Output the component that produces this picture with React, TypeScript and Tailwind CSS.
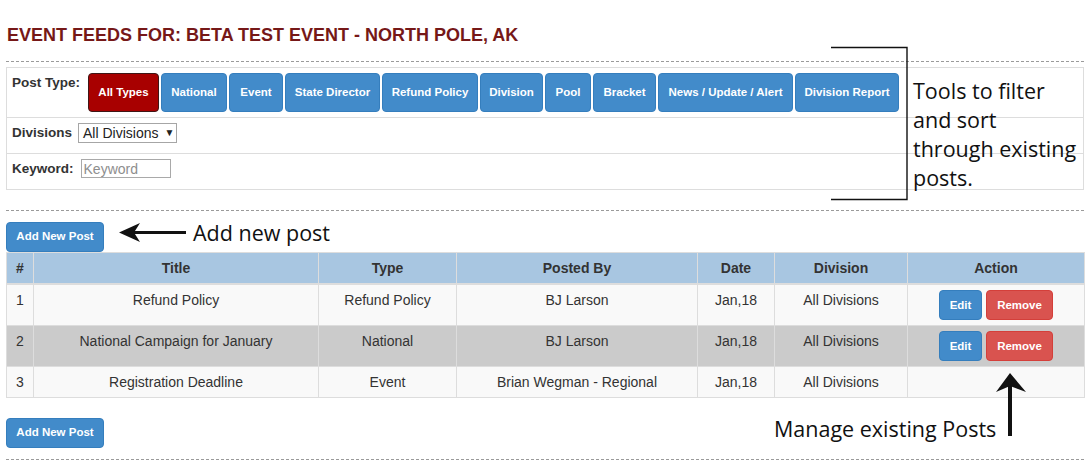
import React from "react";

const types: { label: string; w: string; active?: boolean }[] = [
  { label: "All Types", w: "w-[71px]", active: true },
  { label: "National", w: "w-[66px]" },
  { label: "Event", w: "w-[54px]" },
  { label: "State Director", w: "w-[95px]" },
  { label: "Refund Policy", w: "w-[96px]" },
  { label: "Division", w: "w-[63px]" },
  { label: "Pool", w: "w-[46px]" },
  { label: "Bracket", w: "w-[63px]" },
  { label: "News / Update / Alert", w: "w-[135px]" },
  { label: "Division Report", w: "w-[104px]" },
];

const rows = [
  { n: 1, title: "Refund Policy", type: "Refund Policy", by: "BJ Larson", date: "Jan,18", div: "All Divisions", actions: true, bg: "bg-[#f9f9f9]" },
  { n: 2, title: "National Campaign for January", type: "National", by: "BJ Larson", date: "Jan,18", div: "All Divisions", actions: true, bg: "bg-[#cbcbcb]" },
  { n: 3, title: "Registration Deadline", type: "Event", by: "Brian Wegman - Regional", date: "Jan,18", div: "All Divisions", actions: false, bg: "bg-[#f9f9f9]" },
];

function AddButton() {
  return (
    <div className="w-[98px] h-[30px] rounded-[4px] bg-[#428bca] border border-[#357ebd] text-white font-bold text-[11.5px] flex items-center justify-center">
      Add New Post
    </div>
  );
}

function Dashed() {
  return <div className="border-t border-dashed border-[#9a9a9a] w-full" />;
}

export default function App() {
  const sans = { fontFamily: '"Liberation Sans", Arial, sans-serif' };
  const note = { fontFamily: '"Open Sans", "Noto Sans", sans-serif' };
  const td = "border border-[#dddddd] px-[5px] py-[5px] leading-[20px] align-top text-center";
  const th = "border border-[#dddddd] border-b-2 px-[5px] py-[5px] leading-[20px] text-center font-bold";
  return (
    <div className="relative w-[1089px] h-[463px] bg-white overflow-hidden text-[#333]" style={sans}>
      <div className="pl-[6px] pr-[5px]">
        <div className="pt-[25px] h-[45px] leading-[20px] text-[18px] font-bold text-[#761818] pl-[1px]">
          EVENT FEEDS FOR: BETA TEST EVENT - NORTH POLE, AK
        </div>
        <div className="mt-[16px]">
          <Dashed />
        </div>

        {/* Filter box */}
        <div className="mt-[5px] border border-[#dddddd]">
          <div className="flex items-start h-[50px] pt-[5px] pl-[5px] border-b border-[#dddddd]">
            <div className="w-[76px] shrink-0 text-[13.5px] font-bold leading-[20px]">Post Type:</div>
            <div className="flex gap-[2px]">
              {types.map((t) => (
                <div
                  key={t.label}
                  className={`${t.w} h-[39px] rounded-[4px] border flex items-center justify-center text-white font-bold text-[11.5px] whitespace-nowrap ${
                    t.active ? "bg-[#a80000] border-[#3f1616]" : "bg-[#428bca] border-[#357ebd]"
                  }`}
                >
                  {t.label}
                </div>
              ))}
            </div>
          </div>
          <div className="flex items-start h-[36px] pt-[5px] pl-[5px] border-b border-[#dddddd]">
            <div className="text-[13.5px] font-bold leading-[20px]">Divisions</div>
            <div className="ml-[6px] w-[99px] h-[20px] border border-[#a6a6a6] bg-white flex items-center pl-[4px] text-[14px] text-[#222] leading-[18px]">
              <span>All Divisions</span>
              <span className="ml-[6px] text-[10px]">▼</span>
            </div>
          </div>
          <div className="flex items-start h-[35px] pt-[5px] pl-[5px]">
            <div className="text-[13.5px] font-bold leading-[20px]">Keyword:</div>
            <input
              placeholder="Keyword"
              className="ml-[7px] w-[90px] h-[19px] border border-[#a9a9a9] px-[2px] text-[14px] leading-[17px] text-[#222] placeholder:text-[#8e8e8e] outline-none"
              style={sans}
            />
          </div>
        </div>

        <div className="mt-[20px]">
          <Dashed />
        </div>
        <div className="mt-[11px]">
          <AddButton />
        </div>

        <table className="w-[1078px] table-fixed border-collapse text-[14px]">
          <colgroup>
            <col className="w-[27px]" />
            <col className="w-[285px]" />
            <col className="w-[138px]" />
            <col className="w-[241px]" />
            <col className="w-[77px]" />
            <col className="w-[133px]" />
            <col className="w-[177px]" />
          </colgroup>
          <thead>
            <tr className="bg-[#a8c6e1]">
              <th className={th}>#</th>
              <th className={th}>Title</th>
              <th className={th}>Type</th>
              <th className={th}>Posted By</th>
              <th className={th}>Date</th>
              <th className={th}>Division</th>
              <th className={th}>Action</th>
            </tr>
          </thead>
          <tbody>
            {rows.map((r) => (
              <tr key={r.n} className={r.bg}>
                <td className={td}>{r.n}</td>
                <td className={td}>{r.title}</td>
                <td className={td}>{r.type}</td>
                <td className={td}>{r.by}</td>
                <td className={td}>{r.date}</td>
                <td className={td}>{r.div}</td>
                <td className={td}>
                  {r.actions ? (
                    <div className="flex justify-center gap-[4px]">
                      <div className="w-[43px] h-[30px] rounded-[4px] bg-[#428bca] border border-[#357ebd] text-white font-bold text-[11.5px] flex items-center justify-center">
                        Edit
                      </div>
                      <div className="w-[67px] h-[30px] rounded-[4px] bg-[#d9534f] border border-[#d43f3a] text-white font-bold text-[11.5px] flex items-center justify-center">
                        Remove
                      </div>
                    </div>
                  ) : null}
                </td>
              </tr>
            ))}
          </tbody>
        </table>

        <div className="mt-[20px]">
          <AddButton />
        </div>
        <div className="mt-[11px]">
          <Dashed />
        </div>
      </div>

      {/* Annotations */}
      <svg className="absolute left-[830px] top-[46px]" width="79" height="155" viewBox="0 0 79 155">
        <path d="M1 1.5 H77 V153.5 H1" fill="none" stroke="#111" strokeWidth="1.4" />
      </svg>
      <div className="absolute left-[913px] top-[76px] text-[21.5px] leading-[29px] text-[#111] whitespace-nowrap" style={note}>
        Tools to filter
        <br />
        and sort
        <br />
        through existing
        <br />
        posts.
      </div>

      <svg className="absolute left-[115px] top-[220px]" width="75" height="26" viewBox="0 0 75 26">
        <rect x="17" y="11" width="54" height="3" fill="#111" />
        <polygon points="4,12.5 25,3 19,12.5 25,22" fill="#111" />
      </svg>
      <div className="absolute left-[193px] top-[218px] text-[21.5px] leading-[29px] text-[#111] whitespace-nowrap" style={note}>
        Add new post
      </div>

      <div className="absolute left-[774px] top-[414px] text-[21.5px] leading-[29px] text-[#111] whitespace-nowrap" style={note}>
        Manage existing Posts
      </div>
      <svg className="absolute left-[995px] top-[371px]" width="33" height="67" viewBox="0 0 33 67">
        <rect x="13" y="14" width="4" height="51" fill="#111" />
        <polygon points="15,2 31,21 15,15 1,21" fill="#111" />
      </svg>
    </div>
  );
}
